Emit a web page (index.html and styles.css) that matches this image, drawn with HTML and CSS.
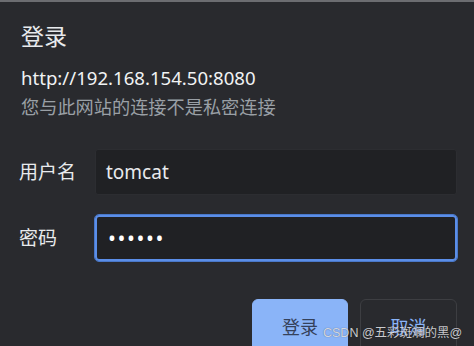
FILE: index.html
```html
<!DOCTYPE html>
<html lang="zh-CN">
<head>
<meta charset="utf-8">
<link rel="stylesheet" href="styles.css">
</head>
<body>
<div class="dialog">
  <h1 class="title">登录</h1>
  <div class="url">http://192.168.154.50:8080</div>
  <div class="note">您与此网站的连接不是私密连接</div>
  <div class="form">
    <label class="label">用户名</label>
    <div class="field">tomcat</div>
    <label class="label">密码</label>
    <div class="field focused"><span class="dots">••••••</span></div>
  </div>
  <div class="actions">
    <button class="btn primary">登录</button>
    <button class="btn secondary">取消</button>
  </div>
  <div class="watermark">CSDN @五彩斑斓的黑@</div>
</div>
</body>
</html>
```
FILE: styles.css
```css
html, body {
  margin: 0;
  padding: 0;
  height: 100%;
  overflow: hidden;
  background: #292a2e;
}
body {
  font-family: "Noto Sans", "Noto Sans CJK SC", sans-serif;
  color: #e8eaed;
}
.dialog {
  position: relative;
  height: 100%;
  box-sizing: border-box;
  border-top: 2px solid #6c6d71;
  padding: 0 17px 0 20px;
}
.title {
  margin: 19px 0 0 1px;
  font-size: 23px;
  line-height: 30px;
  font-weight: 400;
  color: #e8eaed;
}
.url {
  margin-top: 15px;
  margin-left: 1px;
  font-size: 18.6px;
  line-height: 24px;
  color: #f1f3f4;
}
.note {
  margin-top: 5px;
  margin-left: 1px;
  font-size: 18.2px;
  line-height: 24px;
  color: #9aa0a6;
}
.form {
  margin-top: 30px;
  display: grid;
  grid-template-columns: 75px 1fr;
  row-gap: 20px;
  align-items: center;
}
.label {
  font-size: 19px;
  line-height: 24px;
  color: #e8eaed;
  margin-left: -1px;
}
.field {
  height: 46px;
  box-sizing: border-box;
  background: #202124;
  border: 1px solid #2c2d31;
  border-radius: 3px;
  padding: 0 10px;
  display: flex;
  align-items: center;
  font-size: 19px;
  color: #e8eaed;
}
.field.focused {
  border: 2px solid #5b8ee8;
  outline: 1px solid #4a78c8;
  border-radius: 4px;
  padding-left: 11px;
}
.dots {
  font-size: 21px;
  letter-spacing: 1.6px;
  color: #ffffff;
}
.actions {
  margin-top: 38px;
  display: flex;
  justify-content: flex-end;
  gap: 12px;
}
.btn {
  width: 96px;
  height: 54px;
  box-sizing: border-box;
  border-radius: 6px;
  font-family: "Noto Sans CJK SC", sans-serif;
  font-size: 18px;
  padding: 0;
}
.primary {
  background: #8ab4f8;
  border: 1px solid #8ab4f8;
  color: #35415a;
}
.secondary {
  width: 97px;
  background: transparent;
  border: 1px solid #3d3e42;
  color: #8ab4f8;
}
.watermark {
  position: absolute;
  left: 323px;
  top: 322px;
  font-family: "Liberation Sans", "Noto Sans CJK SC", sans-serif;
  font-size: 12.5px;
  line-height: 18px;
  color: rgba(235, 235, 240, 0.85);
  text-shadow: 0 0 1px rgba(0, 0, 0, 0.5);
  white-space: nowrap;
}
```
